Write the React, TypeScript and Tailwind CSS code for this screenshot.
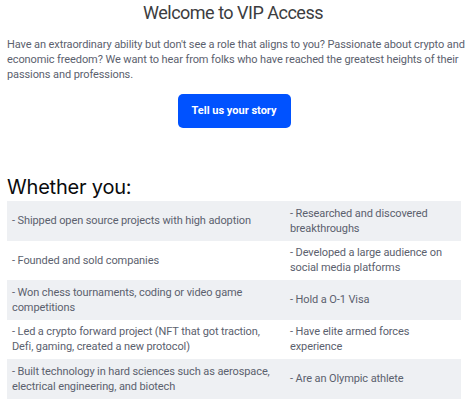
import React from "react";

const rows: [string, string][] = [
  ["- Shipped open source projects with high adoption", "- Researched and discovered breakthroughs"],
  ["- Founded and sold companies", "- Developed a large audience on social media platforms"],
  ["- Won chess tournaments, coding or video game competitions", "- Hold a O-1 Visa"],
  ["- Led a crypto forward project (NFT that got traction, Defi, gaming, created a new protocol)", "- Have elite armed forces experience"],
  ["- Built technology in hard sciences such as aerospace, electrical engineering, and biotech", "- Are an Olympic athlete"],
];

export default function App() {
  return (
    <div className="w-[474px] h-[409px] bg-white overflow-hidden px-[7px] font-['Roboto',sans-serif]">
      <h1 className="h-[26px] leading-[26px] text-center pr-[8px] text-[18px] text-[#3c3d40] tracking-[-0.5px]">
        Welcome to VIP Access
      </h1>
      <p className="mt-[11px] w-[458px] text-[11px] leading-[15px] text-[#5b616e] tracking-[-0.1px]">
        Have an extraordinary ability but don't see a role that aligns to you? Passionate about crypto and economic freedom? We want to hear from folks who have reached the greatest heights of their passions and professions.
      </p>
      <div className="mt-[12px] flex justify-center">
        <button className="w-[113px] h-[34px] ml-[-6px] rounded-[5px] bg-[#0052ff] text-white text-[11px] font-bold">
          Tell us your story
        </button>
      </div>
      <h2 className="mt-[47px] h-[25px] leading-[25px] text-[20px] text-[#0a0b0d] tracking-[-0.2px] font-['Inter',sans-serif]">
        Whether you:
      </h2>
      <div className="mt-[1px] w-[454px] flex flex-col">
        {rows.map((r, i) => (
          <div
            key={i}
            className={`h-[39.5px] flex items-center text-[11px] leading-[15px] text-[#5b616e] tracking-[-0.1px] ${i % 2 === 0 ? "bg-[#eef0f3]" : "bg-white"}`}
          >
            <div className="w-[283px] pl-[5px] pr-[12px]">{r[0]}</div>
            <div className="flex-1 pr-[8px]">{r[1]}</div>
          </div>
        ))}
      </div>
    </div>
  );
}
